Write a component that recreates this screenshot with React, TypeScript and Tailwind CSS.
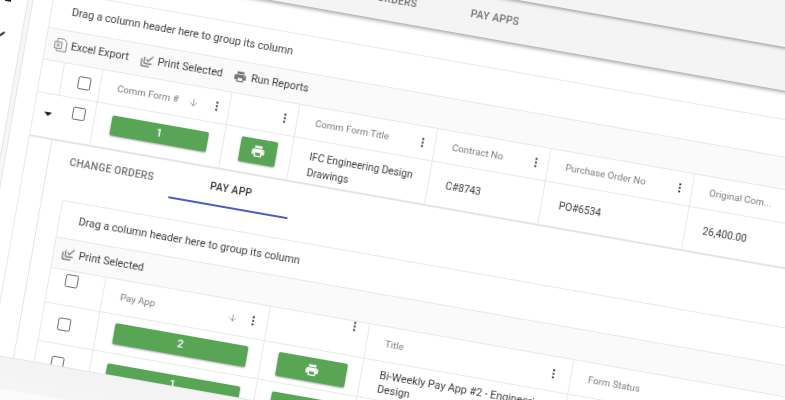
import React from "react";
import { ArrowDown } from "lucide-react";
import { MdPrint } from "react-icons/md";

const Kebab = () => (
  <svg width="4" height="10" viewBox="0 0 4 10" className="shrink-0 text-[#333]" fill="currentColor">
    <circle cx="2" cy="1.4" r="1.1" />
    <circle cx="2" cy="5" r="1.1" />
    <circle cx="2" cy="8.6" r="1.1" />
  </svg>
);

const CheckBox = () => (
  <div className="w-[13px] h-[13px] rounded-[2px] border-[1.5px] border-[#6e6e6e] bg-white" />
);

const ExcelIcon = () => (
  <svg width="13" height="15" viewBox="0 0 13 15" fill="none" stroke="#8a8a8a" strokeWidth="1" className="shrink-0">
    <path d="M3 .5h6.5l3 3v9.5H3z" />
    <path d="M.7 4h7v6.500h-7z" fill="#fafafa" />
    <path d="M2.600 5.500l3 3.500M5.600 5.500l-3 3.500" />
  </svg>
);

const SelectedIcon = () => (
  <svg width="13" height="13" viewBox="0 0 14 14" fill="none" stroke="#808080" strokeWidth="1.500" className="shrink-0">
    <path d="M1 5v6a2 2 0 0 0 2 2h7" />
    <path d="M3.800 3v6a1 1 0 0 0 1 1h7.500" />
    <path d="M6 5.200l2 2L13 1.500" />
  </svg>
);

const ToolItem = ({ icon, label, className }: { icon: React.ReactNode; label: string; className?: string }) => (
  <div className={`flex items-center gap-[4px] ${className ?? ""}`}>
    {icon}
    <span className="text-[10.700px] text-[#3c3c3c] whitespace-nowrap">{label}</span>
  </div>
);

const HeaderText = ({ children }: { children: React.ReactNode }) => (
  <span className="text-[9.700px] text-[#7b7b7b] whitespace-nowrap">{children}</span>
);

const GreenButton = ({ children, className }: { children: React.ReactNode; className: string }) => (
  <div className={`flex items-center justify-center rounded-[2px] bg-[#59a556] text-white text-[11px] font-medium shadow-[0_1px_2px_rgba(0,0,0,0.35)] ${className}`}>
    {children}
  </div>
);

export default function App() {
  return (
    <div className="relative w-[785px] h-[400px] overflow-hidden bg-white font-[Roboto,sans-serif]">
      <div className="flex w-[1000px] h-[560px] origin-top-left blur-[0.35px] [transform:rotate(10deg)_translateY(-140px)]">
        {/* sidebar sliver */}
        <div className="flex flex-col w-[27px] shrink-0 pt-[138px] pl-[5px] gap-[32px]">
          <div className="w-[6px] h-[2px] bg-[#222]" />
          <div className="w-[6px] h-[2px] -rotate-[45deg] bg-[#222]" />
        </div>
        <div className="w-[6px] shrink-0 border-x border-[#e6e6e6] bg-[#f6f6f6]" />

        <div className="flex flex-col w-[967px] shrink-0">
          <div className="relative z-10 h-[50px] shrink-0 bg-[#f4f4f4] shadow-[0_2px_3px_rgba(0,0,0,0.3)]" />
          <div className="relative z-[5] flex items-center h-[43px] shrink-0 bg-[#f4f4f4] pl-[293px] shadow-[0_2px_4px_rgba(0,0,0,0.35)] text-[10.200px] font-medium tracking-[0.3px] text-[#6f6f6f]">
            <span className="w-[140px] whitespace-nowrap">CHANGE ORDERS</span>
            <span className="whitespace-nowrap">PAY APPS</span>
          </div>
          <div className="h-[28px] shrink-0" />

          <div className="ml-[19px] flex flex-col border-l border-t border-[#e8e8e8]">
            <div className="flex items-center h-[37px] pl-[20px] text-[10.800px] text-[#3c3c3c] border-b border-[#e8e8e8]">
              Drag a column header here to group its column
            </div>
            <div className="flex items-center h-[32px] pl-[8px] bg-[#fafafa] border-b border-[#e8e8e8]">
              <ToolItem icon={<ExcelIcon />} label="Excel Export" className="w-[88px]" />
              <ToolItem icon={<SelectedIcon />} label="Print Selected" className="w-[94px]" />
              <ToolItem icon={<MdPrint size={14} className="text-[#757575] shrink-0" />} label="Run Reports" />
            </div>

            {/* main header */}
            <div className="grid grid-cols-[22px_39px_131px_69px_140px_115px_146px_1fr] h-[33px] border-b border-[#e8e8e8]">
              <div className="border-r border-[#e8e8e8]" />
              <div className="flex items-center pl-[16px] border-r border-[#e8e8e8]">
                <CheckBox />
              </div>
              <div className="flex items-center pl-[17px] pr-[10px] border-r border-[#e8e8e8]">
                <HeaderText>Comm Form #</HeaderText>
                <ArrowDown size={11} strokeWidth={1.500} className="ml-auto mr-[16px] text-[#777]" />
                <Kebab />
              </div>
              <div className="flex items-center justify-end pr-[10px] border-r border-[#e8e8e8]">
                <Kebab />
              </div>
              <div className="flex items-center pl-[18px] pr-[10px] border-r border-[#e8e8e8]">
                <HeaderText>Comm Form Title</HeaderText>
                <div className="ml-auto"><Kebab /></div>
              </div>
              <div className="flex items-center pl-[17px] pr-[10px] border-r border-[#e8e8e8]">
                <HeaderText>Contract No</HeaderText>
                <div className="ml-auto"><Kebab /></div>
              </div>
              <div className="flex items-center pl-[17px] pr-[10px] border-r border-[#e8e8e8]">
                <HeaderText>Purchase Order No</HeaderText>
                <div className="ml-auto"><Kebab /></div>
              </div>
              <div className="flex items-center pl-[17px]">
                <HeaderText>Original Com...</HeaderText>
              </div>
            </div>

            {/* main row */}
            <div className="grid grid-cols-[22px_39px_131px_69px_140px_115px_146px_1fr] h-[45px] border-b-2 border-[#e4e4e4] text-[10.200px] text-[#3c3c3c]">
              <div className="pl-[10px] pt-[18px]">
                <div className="w-0 h-0 border-x-[4px] border-t-[4px] border-x-transparent border-t-[#222]" />
              </div>
              <div className="pl-[16px] pt-[8px] border-r border-[#e8e8e8]">
                <CheckBox />
              </div>
              <div className="pl-[17px] pt-[10px] border-r border-[#e8e8e8]">
                <GreenButton className="w-[98px] h-[20px]">1</GreenButton>
              </div>
              <div className="pl-[17px] pt-[8px] border-r border-[#e8e8e8]">
                <GreenButton className="w-[37px] h-[25px]"><MdPrint size={15} /></GreenButton>
              </div>
              <div className="pl-[18px] pr-[2px] pt-[9px] leading-[16px] border-r border-[#e8e8e8]">
                IFC Engineering Design Drawings
              </div>
              <div className="flex items-center pl-[17px] border-r border-[#e8e8e8]">C#8743</div>
              <div className="flex items-center pl-[17px] border-r border-[#e8e8e8]">PO#6534</div>
              <div className="flex items-center pl-[17px]">26,400.00</div>
            </div>

            {/* detail */}
            <div className="pl-[22px]">
              <div className="flex flex-col border-l border-[#e4e4e4]">
                <div className="flex h-[37px] pl-[3px]">
                  <div className="flex items-center justify-center w-[121px] text-[10.200px] font-medium tracking-[0.3px] text-[#6f6f6f] whitespace-nowrap">
                    CHANGE ORDERS
                  </div>
                  <div className="flex items-center justify-center w-[121px] text-[10.200px] font-medium tracking-[0.3px] text-[#333] border-b-2 border-[#4a5fc1] whitespace-nowrap">
                    PAY APP
                  </div>
                </div>
                <div className="h-[20px]" />

                <div className="ml-[20px] flex flex-col border-l border-t border-[#e8e8e8]">
                  <div className="flex items-center h-[37px] pl-[19px] text-[10.800px] text-[#3c3c3c] border-b border-[#e8e8e8]">
                    Drag a column header here to group its column
                  </div>
                  <div className="flex items-center h-[31px] pl-[8px] bg-[#fafafa] border-b border-[#e8e8e8]">
                    <ToolItem icon={<SelectedIcon />} label="Print Selected" />
                  </div>

                  <div className="grid grid-cols-[56px_167px_101px_207px_177px_1fr] h-[35px] border-b border-[#e8e8e8]">
                    <div className="pl-[16px] pt-[3px] border-r border-[#e8e8e8]">
                      <CheckBox />
                    </div>
                    <div className="flex items-center pl-[17px] pr-[12px] border-r border-[#e8e8e8]">
                      <HeaderText>Pay App</HeaderText>
                      <ArrowDown size={11} strokeWidth={1.500} className="ml-auto mr-[13px] text-[#777]" />
                      <Kebab />
                    </div>
                    <div className="flex items-start justify-end pr-[12px] border-r border-[#e8e8e8]">
                      <Kebab />
                    </div>
                    <div className="flex items-center pl-[18px] pr-[15px] border-r border-[#e8e8e8]">
                      <HeaderText>Title</HeaderText>
                      <div className="ml-auto"><Kebab /></div>
                    </div>
                    <div className="flex items-center pl-[17px]">
                      <HeaderText>Form Status</HeaderText>
                    </div>
                  </div>

                  <div className="grid grid-cols-[56px_167px_101px_207px_177px_1fr] h-[39px] border-b border-[#e8e8e8] text-[10.800px] text-[#3c3c3c]">
                    <div className="pl-[16px] pt-[12px] border-r border-[#e8e8e8]">
                      <CheckBox />
                    </div>
                    <div className="pl-[17px] pt-[8px] border-r border-[#e8e8e8]">
                      <GreenButton className="w-[135px] h-[21px]">2</GreenButton>
                    </div>
                    <div className="pl-[16px] pt-[8px] border-r border-[#e8e8e8]">
                      <GreenButton className="w-[70px] h-[24px]"><MdPrint size={15} /></GreenButton>
                    </div>
                    <div className="pl-[18px] pr-[6px] pt-[7px] leading-[14px] border-r border-[#e8e8e8]">
                      Bi-Weekly Pay App #2 - Engineering Design
                    </div>
                    <div />
                  </div>

                  <div className="grid grid-cols-[56px_167px_101px_207px_177px_1fr] h-[39px] text-[10.800px] text-[#3c3c3c]">
                    <div className="pl-[16px] pt-[12px] border-r border-[#e8e8e8]">
                      <CheckBox />
                    </div>
                    <div className="pl-[16px] pt-[10px] border-r border-[#e8e8e8]">
                      <GreenButton className="w-[135px] h-[21px]">1</GreenButton>
                    </div>
                    <div className="pl-[16px] pt-[9px] border-r border-[#e8e8e8]">
                      <GreenButton className="w-[70px] h-[24px]"><MdPrint size={15} /></GreenButton>
                    </div>
                    <div className="border-r border-[#e8e8e8]" />
                    <div />
                  </div>
                </div>
              </div>
            </div>
          </div>
        </div>

        {/* bottom bar over the grid */}
        <div className="absolute left-0 top-[490px] w-[1000px] h-[70px] border-t border-[#e6e6e6] bg-[linear-gradient(#f3f3f3_0%,#f5f5f5_45%,#fbfbfb_46%,#fbfbfb_100%)]" />
      </div>
    </div>
  );
}
